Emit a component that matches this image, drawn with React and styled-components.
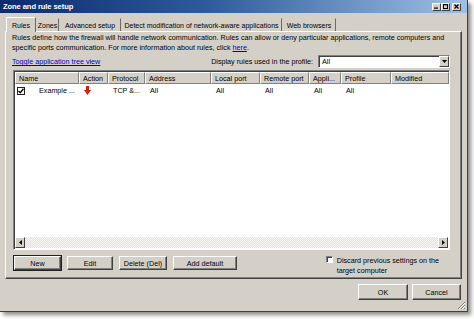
import React from 'react';
import styled, { createGlobalStyle } from 'styled-components';

const FS = '7.2px';

const Global = createGlobalStyle`
  html, body { margin: 0; padding: 0; background: #ffffff; }
  body { font-family: "Liberation Sans", Arial, sans-serif; font-size: ${FS}; color: #000; }
  * { box-sizing: border-box; }
`;

const Stage = styled.div`
  width: 474px;
  height: 319px;
  overflow: hidden;
  background: #ffffff;
`;

const Window = styled.div`
  position: relative;
  width: 468px;
  height: 312px;
  background: #d4d0c8;
  border-right: 1px solid #404040;
  border-bottom: 1px solid #404040;
  box-shadow: 3px 3px 4px rgba(0, 0, 0, 0.45);
  display: flex;
  flex-direction: column;
`;

const TitleBar = styled.div`
  height: 13px;
  display: flex;
  align-items: center;
  padding: 0 6px 0 3px;
  background: linear-gradient(to right, #0c2a6e 0%, #2f5c9c 45%, #9fc0e4 100%);
`;

const Title = styled.span`
  color: #ffffff;
  font-weight: bold;
  font-size: 7.6px;
  letter-spacing: -0.1px;
`;

const Controls = styled.div`
  margin-left: auto;
  display: flex;
`;

const CtlButton = styled.div`
  width: 9px;
  height: 8px;
  margin-left: ${p => (p.$gap ? '2px' : '0')};
  background: #d4d0c8;
  border-top: 1px solid #fff;
  border-left: 1px solid #fff;
  border-right: 1px solid #404040;
  border-bottom: 1px solid #404040;
  display: flex;
  align-items: center;
  justify-content: center;
`;

const TabRow = styled.div`
  margin-top: 3px;
  height: 15px;
  padding-left: 6px;
  display: flex;
  align-items: flex-end;
`;

const Tab = styled.div`
  width: ${p => p.$w}px;
  height: ${p => (p.$active ? 15 : 13)}px;
  display: flex;
  align-items: center;
  justify-content: center;
  white-space: nowrap;
  font-size: 7px;
  background: #d4d0c8;
  border-top: 1px solid ${p => (p.$active ? '#fff' : '#d4d0c8')};
  border-left: 1px solid ${p => (p.$active ? '#fff' : '#d4d0c8')};
  border-right: 1px solid #6a6a6a;
  margin-bottom: ${p => (p.$active ? '-1px' : '0')};
  position: relative;
  z-index: ${p => (p.$active ? 1 : 0)};
`;

const Panel = styled.div`
  margin: 0 5px;
  height: 248px;
  border-top: 1px solid #ffffff;
  border-left: 1px solid #ffffff;
  border-right: 1px solid #404040;
  border-bottom: 1px solid #404040;
  box-shadow: inset -1px -1px 0 #808080;
  padding: 1px 11px 0 7px;
  display: flex;
  flex-direction: column;
`;

const Description = styled.p`
  margin: 0 0 0 -1px;
  line-height: 10px;
  white-space: nowrap;
`;

const Link = styled.a`
  color: #0000cc;
  text-decoration: underline;
  cursor: pointer;
`;

const FilterRow = styled.div`
  margin-top: 2px;
  height: 13px;
  display: flex;
  align-items: center;
`;

const ToggleLink = styled(Link)`
  margin-left: -1px;
  white-space: nowrap;
`;

const FilterLabel = styled.span`
  margin-left: auto;
  margin-right: 5px;
  white-space: nowrap;
`;

const Select = styled.div`
  width: 132px;
  height: 13px;
  background: #fff;
  border-top: 1px solid #808080;
  border-left: 1px solid #808080;
  border-right: 1px solid #fff;
  border-bottom: 1px solid #fff;
  box-shadow: inset 1px 1px 0 #404040;
  display: flex;
  align-items: center;
  padding-left: 3px;
`;

const SelectText = styled.span`
  flex: 1;
`;

const DropButton = styled.div`
  width: 10px;
  height: 11px;
  background: #d4d0c8;
  border-top: 1px solid #fff;
  border-left: 1px solid #fff;
  border-right: 1px solid #404040;
  border-bottom: 1px solid #404040;
  display: flex;
  align-items: center;
  justify-content: center;
`;

const Table = styled.div`
  margin-top: 2px;
  height: 180px;
  background: #fff;
  border-top: 1px solid #808080;
  border-left: 1px solid #808080;
  border-right: 1px solid #fff;
  border-bottom: 1px solid #fff;
  box-shadow: inset 1px 1px 0 #404040;
  padding: 1px 0 0 1px;
  display: flex;
  flex-direction: column;
`;

const cols = [64, 29, 37, 66, 49, 49, 32, 50, 56];

const HeaderRow = styled.div`
  display: flex;
  height: 12px;
`;

const HeaderCell = styled.div`
  width: ${p => p.$w}px;
  flex: ${p => (p.$grow ? 1 : 'none')};
  background: #d4d0c8;
  border-top: 1px solid #fff;
  border-left: 1px solid #fff;
  border-right: 1px solid #808080;
  border-bottom: 1px solid #808080;
  padding-left: 3px;
  display: flex;
  align-items: center;
  white-space: nowrap;
  overflow: hidden;
`;

const Rows = styled.div`
  flex: 1;
`;

const Row = styled.div`
  display: flex;
  height: 11px;
  margin-top: 1px;
`;

const Cell = styled.div`
  width: ${p => p.$w}px;
  flex: none;
  padding-left: ${p => p.$pl ?? 5}px;
  display: flex;
  align-items: center;
  white-space: nowrap;
  gap: 14px;
`;

const RowCheck = styled.div`
  width: 8px;
  height: 8px;
  flex: none;
  border: 1px solid #202020;
  background: #fff;
  display: flex;
  align-items: center;
  justify-content: center;
`;

const ScrollBar = styled.div`
  height: 11px;
  display: flex;
  background: #ecebe7;
  margin-right: 1px;
  margin-bottom: 1px;
`;

const ScrollTrack = styled.div`
  flex: 1;
  background-color: #efeeea;
  background-image: repeating-conic-gradient(#e4e2dc 0% 25%, #f6f5f2 0% 50%);
  background-size: 2px 2px;
`;

const ScrollArrow = styled.div`
  width: 10px;
  height: 11px;
  background: #d4d0c8;
  border-top: 1px solid #fff;
  border-left: 1px solid #fff;
  border-right: 1px solid #404040;
  border-bottom: 1px solid #404040;
  display: flex;
  align-items: center;
  justify-content: center;
`;

const ActionRow = styled.div`
  margin-top: 6px;
  display: flex;
  align-items: flex-start;
`;

const Button = styled.button`
  width: ${p => p.$w}px;
  height: ${p => p.$h || 14}px;
  margin-right: ${p => p.$mr ?? 6}px;
  padding: 0;
  font-family: "Liberation Sans", Arial, sans-serif;
  font-size: ${FS};
  color: #000;
  background: #d4d0c8;
  border-top: 1px solid #fff;
  border-left: 1px solid #fff;
  border-right: 1px solid #404040;
  border-bottom: 1px solid #404040;
  box-shadow: ${p => (p.$default ? '0 0 0 1px #202020, inset -1px -1px 0 #808080' : 'inset -1px -1px 0 #808080')};
  ${p => (p.$default ? 'margin-left: 1px;' : '')}
  display: flex;
  align-items: center;
  justify-content: center;
`;

const CheckOption = styled.label`
  margin-left: auto;
  margin-right: 11px;
  display: flex;
  align-items: flex-start;
  gap: 4px;
  line-height: 10px;
`;

const Box = styled.span`
  width: 7px;
  height: 7px;
  background: #fff;
  border-top: 1px solid #808080;
  border-left: 1px solid #808080;
  border-right: 1px solid #fff;
  border-bottom: 1px solid #fff;
  box-shadow: inset 1px 1px 0 #404040;
  flex: none;
`;

const Footer = styled.div`
  margin-top: 5px;
  padding-right: 6px;
  display: flex;
  justify-content: flex-end;
`;

const Grip = styled.svg`
  position: absolute;
  right: 1px;
  bottom: 1px;
`;

const Tri = ({ dir }) => {
  const pts = {
    down: '0,0 5,0 2.5,3',
    left: '3,0 3,5 0,2.5',
    right: '0,0 0,5 3,2.5',
  }[dir];
  const size = dir === 'down' ? [5, 3] : [3, 5];
  return (
    <svg width={size[0]} height={size[1]} viewBox={`0 0 ${size[0]} ${size[1]}`}>
      <polygon points={pts} fill="#000" />
    </svg>
  );
};

const RedArrow = () => (
  <svg width="7" height="9" viewBox="0 0 7 9">
    <rect x="2" y="0" width="3" height="5" fill="#e01818" />
    <polygon points="0,4 7,4 3.5,9" fill="#e01818" />
  </svg>
);

const headers = ['Name', 'Action', 'Protocol', 'Address', 'Local port', 'Remote port', 'Appli...', 'Profile', 'Modified'];

export default function App() {
  return (
    <Stage>
      <Global />
      <Window>
        <TitleBar>
          <Title>Zone and rule setup</Title>
          <Controls>
            <CtlButton>
              <svg width="5" height="5" viewBox="0 0 5 5"><rect x="0" y="3.5" width="4" height="1.2" fill="#000" /></svg>
            </CtlButton>
            <CtlButton>
              <svg width="5" height="5" viewBox="0 0 5 5"><rect x="0.5" y="0.5" width="4" height="4" fill="none" stroke="#000" strokeWidth="1" /><rect x="0" y="0" width="5" height="1.3" fill="#000" /></svg>
            </CtlButton>
            <CtlButton $gap>
              <svg width="5" height="5" viewBox="0 0 5 5"><path d="M0.5 0.5 L4.5 4.5 M4.5 0.5 L0.5 4.5" stroke="#000" strokeWidth="1.2" /></svg>
            </CtlButton>
          </Controls>
        </TitleBar>

        <TabRow>
          <Tab $active $w={30}>Rules</Tab>
          <Tab $w={23}>Zones</Tab>
          <Tab $w={62}>Advanced setup</Tab>
          <Tab $w={161}>Detect modification of network-aware applications</Tab>
          <Tab $w={54}>Web browsers</Tab>
        </TabRow>

        <Panel>
          <Description>
            Rules define how the firewall will handle network communication. Rules can allow or deny particular applications, remote computers and
            <br />
            specific ports communication. For more information about rules, click <Link>here</Link>.
          </Description>

          <FilterRow>
            <ToggleLink>Toggle application tree view</ToggleLink>
            <FilterLabel>Display rules used in the profile:</FilterLabel>
            <Select>
              <SelectText>All</SelectText>
              <DropButton><Tri dir="down" /></DropButton>
            </Select>
          </FilterRow>

          <Table>
            <HeaderRow>
              {headers.map((h, i) => (
                <HeaderCell key={h} $w={cols[i]} $grow={i === headers.length - 1}>{h}</HeaderCell>
              ))}
            </HeaderRow>
            <Rows>
              <Row>
                <Cell $w={cols[0]} $pl={2}>
                  <RowCheck>
                    <svg width="6" height="6" viewBox="0 0 6 6"><path d="M0.5 3 L2.3 4.8 L5.5 0.8" fill="none" stroke="#000" strokeWidth="1.4" /></svg>
                  </RowCheck>
                  <span>Example ...</span>
                </Cell>
                <Cell $w={cols[1]}><RedArrow /></Cell>
                <Cell $w={cols[2]}>TCP &amp;...</Cell>
                <Cell $w={cols[3]}>All</Cell>
                <Cell $w={cols[4]}>All</Cell>
                <Cell $w={cols[5]}>All</Cell>
                <Cell $w={cols[6]}>All</Cell>
                <Cell $w={cols[7]}>All</Cell>
                <Cell $w={cols[8]} />
              </Row>
            </Rows>
            <ScrollBar>
              <ScrollArrow><Tri dir="left" /></ScrollArrow>
              <ScrollTrack />
              <ScrollArrow><Tri dir="right" /></ScrollArrow>
            </ScrollBar>
          </Table>

          <ActionRow>
            <Button $default $w={47}>New</Button>
            <Button $w={46}>Edit</Button>
            <Button $w={48}>Delete (Del)</Button>
            <Button $w={64}>Add default</Button>
            <CheckOption>
              <Box />
              <span>Discard previous settings on the<br />target computer</span>
            </CheckOption>
          </ActionRow>
        </Panel>

        <Footer>
          <Button $w={50} $h={16} $mr={4}>OK</Button>
          <Button $w={49} $h={16} $mr={0}>Cancel</Button>
        </Footer>

        <Grip width="10" height="10" viewBox="0 0 10 10">
          <path d="M9 2 L2 9 M9 5 L5 9 M9 8 L8 9" stroke="#808080" strokeWidth="1" />
          <path d="M9 3 L3 9 M9 6 L6 9" stroke="#fff" strokeWidth="1" />
        </Grip>
      </Window>
    </Stage>
  );
}
